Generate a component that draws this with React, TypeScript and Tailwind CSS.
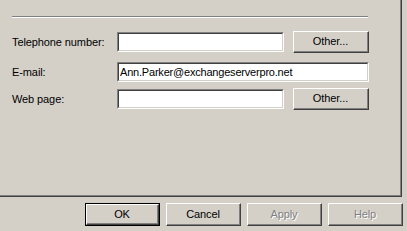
import React from "react";

function Edit({ width, value }: { width: number; value?: string }) {
  return (
    <div
      className="h-[20px] border-t border-l border-[#808080] border-b border-r border-b-white border-r-white"
      style={{ width }}
    >
      <div className="h-full border-t border-l border-[#404040] border-b border-r border-b-[#d4d0c8] border-r-[#d4d0c8] bg-white flex items-center pl-[1px] leading-none tracking-[-0.2px]">
        {value}
      </div>
    </div>
  );
}

function Btn({
  label,
  disabled,
  isDefault,
  className = "",
}: {
  label: string;
  disabled?: boolean;
  isDefault?: boolean;
  className?: string;
}) {
  const inner = (
    <div className="h-full border-t border-l border-white border-b border-r border-b-[#404040] border-r-[#404040]">
      <div className="h-full border-b border-r border-[#808080] border-t-0 border-l-0 flex items-center justify-center">
        <span
          className={
            disabled
              ? "text-[#808080] [text-shadow:1px_1px_0_#ffffff]"
              : "text-black"
          }
        >
          {label}
        </span>
      </div>
    </div>
  );
  if (isDefault) {
    return (
      <div className={"border border-black " + className}>{inner}</div>
    );
  }
  return <div className={className}>{inner}</div>;
}

export default function App() {
  return (
    <div className="w-[407px] h-[231px] bg-[#d4d0c8] overflow-hidden font-['Liberation_Sans',Arial,sans-serif] text-[11px] text-black tracking-[-0.1px]">
      {/* property page */}
      <div className="w-[402px] h-[197px] border-r border-b border-[#404040]">
        <div className="h-full border-r border-b border-[#808080] pl-[12px] pt-[16px]">
          <div className="w-[356px] h-[2px] border-t border-[#808080] border-b border-b-white" />

          <div className="flex items-center h-[22px] mt-[13px]">
            <div className="w-[105px]">Telephone number:</div>
            <Edit width={167} />
            <Btn label="Other..." className="ml-[9px] w-[76px] h-[22px]" />
          </div>

          <div className="flex items-center h-[22px] mt-[8px]">
            <div className="w-[105px]">E-mail:</div>
            <Edit width={252} value="Ann.Parker@exchangeserverpro.net" />
          </div>

          <div className="flex items-center h-[22px] mt-[5px]">
            <div className="w-[105px]">Web page:</div>
            <Edit width={167} />
            <Btn label="Other..." className="ml-[9px] w-[76px] h-[22px]" />
          </div>
        </div>
      </div>

      {/* dialog buttons */}
      <div className="flex justify-end gap-[6px] pr-[4px] mt-[6px]">
        <Btn label="OK" isDefault className="w-[75px] h-[23px]" />
        <Btn label="Cancel" className="w-[75px] h-[23px]" />
        <Btn label="Apply" disabled className="w-[75px] h-[23px]" />
        <Btn label="Help" disabled className="w-[75px] h-[23px]" />
      </div>
    </div>
  );
}
